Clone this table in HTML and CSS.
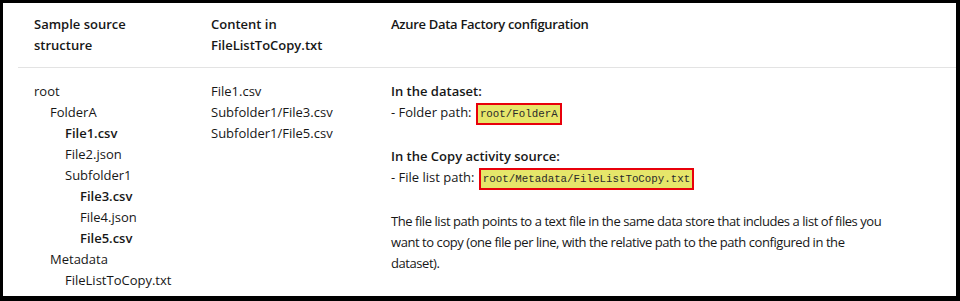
FILE: index.html
```html
<!DOCTYPE html>
<html lang="en">
<head>
    <meta charset="UTF-8">
    <title>Copy a list of files</title>
    <link rel="stylesheet" href="styles.css">
</head>
<body>

    <!-- Eksempel-tabel: kildestruktur, filliste og konfiguration -->
    <div class="frame">
        <table class="sample-table">
            <thead>
                <tr>
                    <th class="col-source">Sample source structure</th>
                    <th class="col-list">Content in FileListToCopy.txt</th>
                    <th class="col-config">Azure Data Factory configuration</th>
                </tr>
            </thead>
            <tbody>
                <tr>
                    <td class="col-source">
                        <div>root</div>
                        <div class="lvl-1">FolderA</div>
                        <div class="lvl-2"><b>File1.csv</b></div>
                        <div class="lvl-2">File2.json</div>
                        <div class="lvl-2">Subfolder1</div>
                        <div class="lvl-3"><b>File3.csv</b></div>
                        <div class="lvl-3">File4.json</div>
                        <div class="lvl-3"><b>File5.csv</b></div>
                        <div class="lvl-1">Metadata</div>
                        <div class="lvl-2">FileListToCopy.txt</div>
                    </td>
                    <td class="col-list">
                        <div>File1.csv</div>
                        <div>Subfolder1/File3.csv</div>
                        <div>Subfolder1/File5.csv</div>
                    </td>
                    <td class="col-config">
                        <p><b>In the dataset:</b><br>
                        - Folder path: <code class="mark">root/FolderA</code></p>
                        <p><b>In the Copy activity source:</b><br>
                        - File list path: <code class="mark">root/Metadata/FileListToCopy.txt</code></p>
                        <p class="note">The file list path points to a text file in the same data store that includes a list of files you want to copy (one file per line, with the relative path to the path configured in the dataset).</p>
                    </td>
                </tr>
            </tbody>
        </table>
    </div>

</body>
</html>
```

FILE: styles.css
```css
/* Generel styling */
html, body {
    margin: 0;
    padding: 0;
    background: #000;
}

body {
    font-family: "Open Sans", "Noto Sans", sans-serif;
    font-size: 13px;
    color: #171717;
}

/* Hvid ramme med sort kant */
.frame {
    margin: 3px 4px 5px 3px;
    height: 293px;
    background: #fff;
    overflow: hidden;
}

/* Tabel */
.sample-table {
    border-collapse: collapse;
    margin-left: 15px;
    width: calc(100% - 15px);
    line-height: 21px;
}

.sample-table th,
.sample-table td {
    text-align: left;
    vertical-align: top;
    padding: 0 16px;
}

.sample-table th {
    font-weight: 600;
    padding-top: 11px;
    padding-bottom: 11px;
    border-bottom: 1px solid #e3e3e3;
}

.sample-table th.col-config {
    letter-spacing: -0.3px;
}

.sample-table td {
    padding-top: 13px;
}

.col-source { width: 145px; }
.col-list { width: 148px; }

/* Indrykning i mappestrukturen */
.lvl-1 { padding-left: 16px; }
.lvl-2 { padding-left: 31px; }
.lvl-3 { padding-left: 46px; }

b {
    font-weight: 600;
}

.col-config p {
    margin: 0 0 21px;
}

.col-config .note {
    letter-spacing: -0.44px;
    max-width: 500px;
}

/* Markeret sti */
.mark {
    font-family: "Liberation Mono", "DejaVu Sans Mono", monospace;
    font-size: 10.8px;
    color: #2a2a2a;
    background: #e6e66a;
    border: 2px solid #e8000b;
    padding: 3px 2px;
    margin-left: 1px;
}
```
